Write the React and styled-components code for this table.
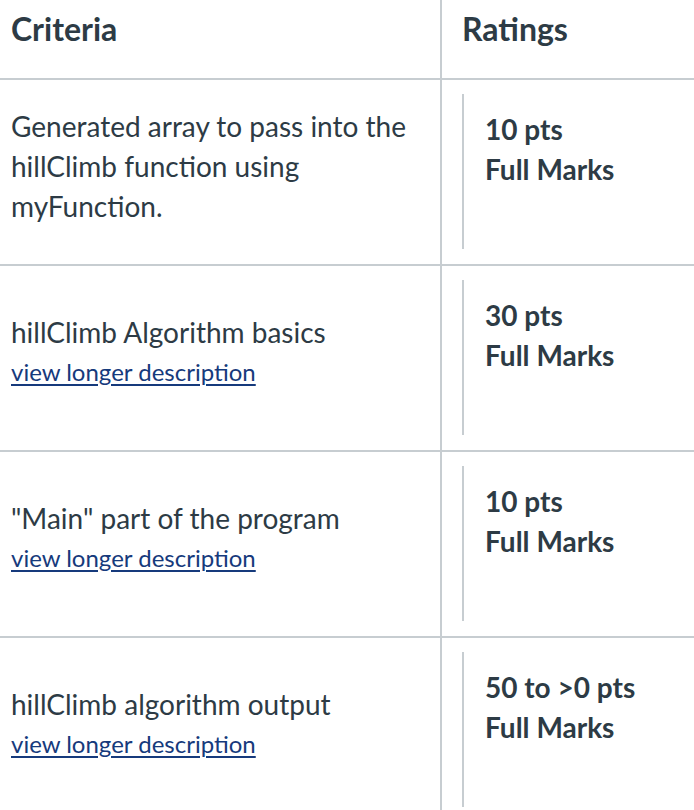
import React from "react";
import styled, { createGlobalStyle } from "styled-components";

const GlobalStyle = createGlobalStyle`
  html, body { margin: 0; padding: 0; background: #ffffff; }
  body {
    font-family: Lato, "Noto Sans", "Liberation Sans", sans-serif;
    color: #2d3b45;
    overflow: hidden;
  }
`;

const Rubric = styled.div`
  width: 694px;
  display: flex;
  flex-direction: column;
`;

const Row = styled.div`
  display: flex;
  border-bottom: 2px solid #c7cdd1;
  height: ${(p) => (p.$header ? "78px" : "184px")};
`;

const HeadCell = styled.div`
  box-sizing: border-box;
  font-size: 32px;
  font-weight: 700;
  line-height: 42px;
  padding: 8px 0 0 ${(p) => (p.$first ? "11px" : "20px")};
  ${(p) => (p.$first ? "width: 442px; border-right: 2px solid #c7cdd1;" : "flex: 1;")}
`;

const CriterionCell = styled.div`
  box-sizing: border-box;
  width: 442px;
  border-right: 2px solid #c7cdd1;
  padding: 0 20px 13px 11px;
  display: flex;
  flex-direction: column;
  justify-content: center;
  font-size: 28px;
  line-height: 40px;
`;

const Description = styled.div``;

const LinkLine = styled.div`
  font-size: 24px;
  line-height: 40px;
`;

const LongLink = styled.a`
  color: #163a7c;
  text-decoration: underline;
  text-underline-offset: 3px;
  text-decoration-thickness: 2px;
  cursor: pointer;
`;

const RatingsCell = styled.div`
  flex: 1;
  box-sizing: border-box;
  padding: 14px 0 15px 20px;
  display: flex;
`;

const Rating = styled.div`
  border-left: 2px solid #c7cdd1;
  padding: 15px 0 0 21px;
  font-size: 28px;
  font-weight: 700;
  line-height: 40px;
  flex: 1;
`;

const rows = [
  { text: "Generated array to pass into the hillClimb function using myFunction.", pts: "10 pts", link: false },
  { text: "hillClimb Algorithm basics", pts: "30 pts", link: true },
  { text: "\"Main\" part of the program", pts: "10 pts", link: true },
  { text: "hillClimb algorithm output", pts: "50 to >0 pts", link: true },
];

export default function App() {
  return (
    <>
      <GlobalStyle />
      <Rubric>
        <Row $header>
          <HeadCell $first>Criteria</HeadCell>
          <HeadCell>Ratings</HeadCell>
        </Row>
        {rows.map((r, i) => (
          <Row key={i}>
            <CriterionCell>
              <Description>{r.text}</Description>
              {r.link && (
                <LinkLine>
                  <LongLink>view longer description</LongLink>
                </LinkLine>
              )}
            </CriterionCell>
            <RatingsCell>
              <Rating>
                <div>{r.pts}</div>
                <div>Full Marks</div>
              </Rating>
            </RatingsCell>
          </Row>
        ))}
      </Rubric>
    </>
  );
}
